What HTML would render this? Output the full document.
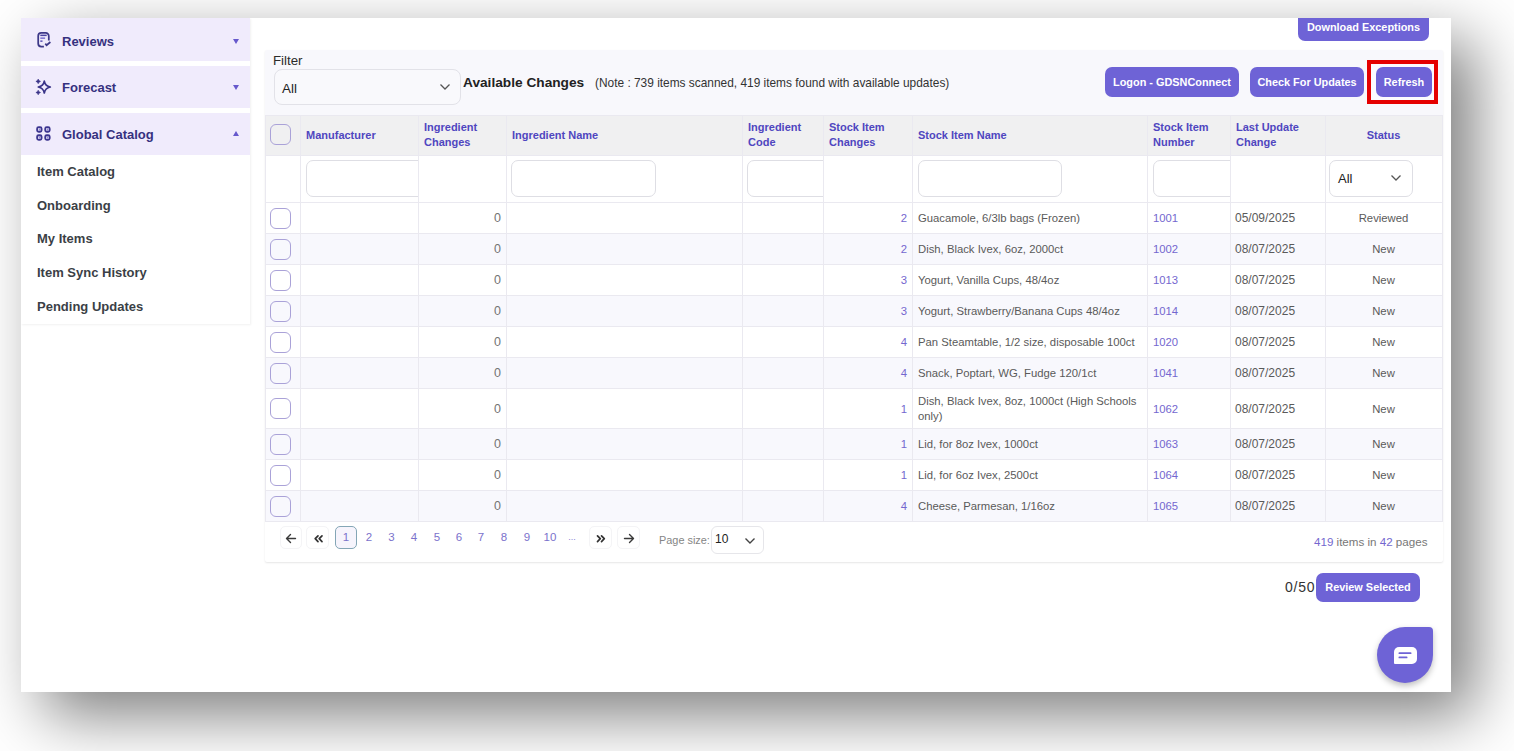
<!DOCTYPE html>
<html><head><meta charset="utf-8">
<style>
*{box-sizing:border-box;margin:0;padding:0}
html,body{width:1514px;height:751px;overflow:hidden;background:#fff;font-family:"Liberation Sans",sans-serif}
.frame{position:absolute;left:21px;top:18px;width:1430px;height:674px;background:#fff;overflow:hidden;box-shadow:23px 23px 60px rgba(0,0,0,0.51)}
.a{position:absolute;white-space:nowrap}
/* sidebar */
.side{position:absolute;left:0;top:0;width:229px;height:306px;background:#fff;box-shadow:1px 1px 2px rgba(0,0,0,0.06)}
.sh{position:absolute;left:0;width:229px;height:42px;background:#f0ebfc}
.sh .t{position:absolute;left:41px;top:1px;line-height:41px;font-size:13px;font-weight:bold;color:#36317f}
.sh .car{position:absolute;left:212px;top:19px;width:0;height:0;border-left:3.5px solid transparent;border-right:3.5px solid transparent;border-top:5px solid #6658cc}
.sh .car.up{border-top:0;border-bottom:5px solid #6658cc;top:18px}
.sh svg{position:absolute}
.si{position:absolute;left:16px;font-size:13px;font-weight:bold;color:#3b3f46;line-height:16px}
/* card */
.card{position:absolute;left:244px;top:32px;width:1178px;height:512px;background:#f8f8fc;border-radius:2px;box-shadow:0 1px 2px rgba(0,0,0,0.10)}
.btn{position:absolute;background:#6e63d6;color:#fff;font-weight:bold;font-size:10.9px;text-align:center;border-radius:7px}
</style></head><body>
<div class="frame">
  <!-- sidebar -->
  <div class="side">
    <div class="sh" style="top:0;height:43px">
      <svg style="left:15px;top:13px" width="16" height="17" viewBox="0 0 16 17"><path d="M12.8 9.6V4.9a3 3 0 0 0-3-3H5.2a3 3 0 0 0-3 3v7.7a3 3 0 0 0 3 3h2.7" fill="none" stroke="#3d3888" stroke-width="1.75"/><rect x="4.3" y="3.6" width="6.4" height="1.5" fill="#4a43a0"/><rect x="4.3" y="6.4" width="4.8" height="1.5" fill="#7c72d0"/><rect x="4.3" y="9.4" width="2.2" height="1.5" fill="#5a52b4"/><path d="M9.3 12.6l1.3 1.6 3.8-3.2" fill="none" stroke="#3d3888" stroke-width="1.7"/></svg>
      <div class="t" style="line-height:46px">Reviews</div><div class="car" style="top:21px"></div>
    </div>
    <div class="sh" style="top:48px">
      <svg style="left:14px;top:12px" width="18" height="18" viewBox="0 0 18 18"><path d="M9.3 3.1Q10.2 8.1 15.3 9Q10.2 9.9 9.3 15Q8.4 9.9 3.3 9Q8.4 8.1 9.3 3.1Z" fill="none" stroke="#3a3488" stroke-width="1.7" stroke-linejoin="round"/><path d="M3.2 1.1Q3.6 3 5.5 3.4Q3.6 3.8 3.2 5.7Q2.8 3.8 0.9 3.4Q2.8 3 3.2 1.1Z" fill="#3a3488" stroke="#3a3488" stroke-width="0.6"/><path d="M3.2 12.2Q3.6 14.1 5.5 14.5Q3.6 14.9 3.2 16.8Q2.8 14.9 0.9 14.5Q2.8 14.1 3.2 12.2Z" fill="#3a3488" stroke="#3a3488" stroke-width="0.6"/></svg>
      <div class="t">Forecast</div><div class="car"></div>
    </div>
    <div class="sh" style="top:95px">
      <svg style="left:14px;top:12px" width="17" height="17" viewBox="0 0 17 17"><g fill="none" stroke="#3d3690" stroke-width="1.9"><rect x="2.15" y="2.15" width="4.4" height="4.6" rx="1.5"/><rect x="10.25" y="2.15" width="4.4" height="4.6" rx="1.5"/><rect x="2.15" y="10.25" width="4.4" height="4.6" rx="1.5"/><rect x="10.25" y="10.25" width="4.4" height="4.6" rx="1.5"/></g><g fill="#7a71c8"><rect x="3.95" y="3.3" width="0.8" height="2.3"/><rect x="12.05" y="3.3" width="0.8" height="2.3"/><rect x="3.95" y="11.4" width="0.8" height="2.3"/><rect x="12.05" y="11.4" width="0.8" height="2.3"/></g></svg>
      <div class="t">Global Catalog</div><div class="car up"></div>
    </div>
    <div class="si" style="top:146px">Item Catalog</div>
    <div class="si" style="top:180px">Onboarding</div>
    <div class="si" style="top:213px">My Items</div>
    <div class="si" style="top:247px">Item Sync History</div>
    <div class="si" style="top:281px">Pending Updates</div>
  </div>

  <!-- download exceptions -->
  <div class="btn" style="left:1277px;top:-6px;width:131px;height:29px;line-height:31px">Download Exceptions</div>

  <!-- card -->
  <div class="card"></div>
  <div class="a" style="left:252px;top:35px;font-size:13.3px;color:#2b2b2b">Filter</div>
  <div class="a" style="left:253px;top:51px;width:187px;height:36px;border:1px solid #e2e2e8;border-radius:8px;background:#f9f9fc"></div>
  <div class="a" style="left:261px;top:63px;font-size:13.4px;color:#222">All</div>
  <svg class="a" style="left:418px;top:65px" width="12" height="8" viewBox="0 0 12 8"><path d="M1.5 1.5l4.5 4.5 4.5-4.5" fill="none" stroke="#555" stroke-width="1.3"/></svg>
  <div class="a" style="left:442px;top:57px;font-size:13.7px;font-weight:bold;color:#222">Available Changes</div>
  <div class="a" style="left:574px;top:58px;font-size:11.9px;color:#333">(Note : 739 items scanned, 419 items found with available updates)</div>

  <div class="btn" style="left:1084px;top:49px;width:134px;height:30px;line-height:30px">Logon - GDSNConnect</div>
  <div class="btn" style="left:1229px;top:49px;width:114px;height:30px;line-height:30px">Check For Updates</div>
  <div class="a" style="left:1346px;top:42px;width:71px;height:44px;border:4.5px solid #e50000;background:#fbfafe"></div>
  <div class="btn" style="left:1355px;top:49px;width:56px;height:30px;line-height:30px">Refresh</div>

  <div id="table"><div class="a" style="left:244px;top:97px;width:1177px;height:40px;background:#f0f0f1;"></div>
<div class="a" style="left:244px;top:137px;width:1177px;height:47px;background:#fff;"></div>
<div class="a" style="left:244px;top:184px;width:1177px;height:31px;background:#ffffff;"></div>
<div class="a" style="left:244px;top:215px;width:1177px;height:31px;background:#f8f8fd;"></div>
<div class="a" style="left:244px;top:246px;width:1177px;height:31px;background:#ffffff;"></div>
<div class="a" style="left:244px;top:277px;width:1177px;height:31px;background:#f8f8fd;"></div>
<div class="a" style="left:244px;top:308px;width:1177px;height:31px;background:#ffffff;"></div>
<div class="a" style="left:244px;top:339px;width:1177px;height:31px;background:#f8f8fd;"></div>
<div class="a" style="left:244px;top:370px;width:1177px;height:40px;background:#ffffff;"></div>
<div class="a" style="left:244px;top:410px;width:1177px;height:31px;background:#f8f8fd;"></div>
<div class="a" style="left:244px;top:441px;width:1177px;height:31px;background:#ffffff;"></div>
<div class="a" style="left:244px;top:472px;width:1177px;height:31px;background:#f8f8fd;"></div>
<div class="a" style="left:244px;top:503px;width:1178px;height:41px;background:#fff;border-radius:0 0 3px 3px;"></div>
<div class="a" style="left:285px;top:97px;height:40px;line-height:40px;color:#4f46c0;font-weight:bold;font-size:11px;">Manufacturer</div>
<div class="a" style="left:403px;top:102px;line-height:15px;color:#4f46c0;font-weight:bold;font-size:11px;">Ingredient<br>Changes</div>
<div class="a" style="left:491px;top:97px;height:40px;line-height:40px;color:#4f46c0;font-weight:bold;font-size:11px;">Ingredient Name</div>
<div class="a" style="left:727px;top:102px;line-height:15px;color:#4f46c0;font-weight:bold;font-size:11px;">Ingredient<br>Code</div>
<div class="a" style="left:808px;top:102px;line-height:15px;color:#4f46c0;font-weight:bold;font-size:11px;">Stock Item<br>Changes</div>
<div class="a" style="left:897px;top:97px;height:40px;line-height:40px;color:#4f46c0;font-weight:bold;font-size:11px;">Stock Item Name</div>
<div class="a" style="left:1132px;top:102px;line-height:15px;color:#4f46c0;font-weight:bold;font-size:11px;">Stock Item<br>Number</div>
<div class="a" style="left:1215px;top:102px;line-height:15px;color:#4f46c0;font-weight:bold;font-size:11px;">Last Update<br>Change</div>
<div class="a" style="left:1304px;top:97px;height:40px;line-height:40px;color:#4f46c0;font-weight:bold;font-size:11px;width:117px;text-align:center;">Status</div>
<div class="a" style="left:280px;top:137px;width:117px;height:47px;overflow:hidden"><div style="position:absolute;left:5px;top:5px;width:150px;height:37px;border:1px solid #dedee4;border-radius:7px;background:#fff"></div></div>
<div class="a" style="left:486px;top:137px;width:235px;height:47px;overflow:hidden"><div style="position:absolute;left:4px;top:5px;width:145px;height:37px;border:1px solid #dedee4;border-radius:7px;background:#fff"></div></div>
<div class="a" style="left:722px;top:137px;width:80px;height:47px;overflow:hidden"><div style="position:absolute;left:4px;top:5px;width:150px;height:37px;border:1px solid #dedee4;border-radius:7px;background:#fff"></div></div>
<div class="a" style="left:892px;top:137px;width:234px;height:47px;overflow:hidden"><div style="position:absolute;left:5px;top:5px;width:144px;height:37px;border:1px solid #dedee4;border-radius:7px;background:#fff"></div></div>
<div class="a" style="left:1127px;top:137px;width:82px;height:47px;overflow:hidden"><div style="position:absolute;left:5px;top:5px;width:150px;height:37px;border:1px solid #dedee4;border-radius:7px;background:#fff"></div></div>
<div class="a" style="left:1308px;top:142px;width:84px;height:37px;border:1px solid #dedee4;border-radius:7px;background:#fff;"></div>
<div class="a" style="left:1317px;top:142px;height:37px;line-height:37px;font-size:13px;color:#222;">All</div>
<svg class="a" style="left:1369px;top:156px" width="12" height="8" viewBox="0 0 12 8"><path d="M1.5 1.5l4.5 4.5 4.5-4.5" fill="none" stroke="#555" stroke-width="1.3"/></svg>
<div class="a" style="left:244px;top:97px;width:1px;height:406px;background:#eae9f0;"></div>
<div class="a" style="left:279px;top:97px;width:1px;height:406px;background:#eae9f0;"></div>
<div class="a" style="left:397px;top:97px;width:1px;height:406px;background:#eae9f0;"></div>
<div class="a" style="left:485px;top:97px;width:1px;height:406px;background:#eae9f0;"></div>
<div class="a" style="left:721px;top:97px;width:1px;height:406px;background:#eae9f0;"></div>
<div class="a" style="left:802px;top:97px;width:1px;height:406px;background:#eae9f0;"></div>
<div class="a" style="left:891px;top:97px;width:1px;height:406px;background:#eae9f0;"></div>
<div class="a" style="left:1126px;top:97px;width:1px;height:406px;background:#eae9f0;"></div>
<div class="a" style="left:1209px;top:97px;width:1px;height:406px;background:#eae9f0;"></div>
<div class="a" style="left:1304px;top:97px;width:1px;height:406px;background:#eae9f0;"></div>
<div class="a" style="left:1421px;top:97px;width:1px;height:406px;background:#eae9f0;"></div>
<div class="a" style="left:244px;top:97px;width:1178px;height:1px;background:#eae9f0;"></div>
<div class="a" style="left:244px;top:137px;width:1178px;height:1px;background:#eae9f0;"></div>
<div class="a" style="left:244px;top:184px;width:1178px;height:1px;background:#eae9f0;"></div>
<div class="a" style="left:244px;top:215px;width:1178px;height:1px;background:#eae9f0;"></div>
<div class="a" style="left:244px;top:246px;width:1178px;height:1px;background:#eae9f0;"></div>
<div class="a" style="left:244px;top:277px;width:1178px;height:1px;background:#eae9f0;"></div>
<div class="a" style="left:244px;top:308px;width:1178px;height:1px;background:#eae9f0;"></div>
<div class="a" style="left:244px;top:339px;width:1178px;height:1px;background:#eae9f0;"></div>
<div class="a" style="left:244px;top:370px;width:1178px;height:1px;background:#eae9f0;"></div>
<div class="a" style="left:244px;top:410px;width:1178px;height:1px;background:#eae9f0;"></div>
<div class="a" style="left:244px;top:441px;width:1178px;height:1px;background:#eae9f0;"></div>
<div class="a" style="left:244px;top:472px;width:1178px;height:1px;background:#eae9f0;"></div>
<div class="a" style="left:244px;top:503px;width:1178px;height:1px;background:#eae9f0;"></div>
<div class="a" style="left:249px;top:106px;width:21px;height:21px;border:1.8px solid #aaa2d8;border-radius:6px;background:transparent;"></div>
<div class="a" style="left:249px;top:190px;width:21px;height:21px;border:1.8px solid #aaa2d8;border-radius:6px;background:transparent;"></div>
<div class="a" style="left:397px;top:185px;height:31px;line-height:31px;font-size:11.3px;color:#5a5a5a;font-size:12.5px;color:#747474;width:83px;text-align:right;">0</div>
<div class="a" style="left:802px;top:185px;height:31px;line-height:31px;font-size:11.3px;color:#7467cf;width:84px;text-align:right;">2</div>
<div class="a" style="left:897px;top:185px;height:31px;line-height:31px;font-size:11.3px;color:#5a5a5a;">Guacamole, 6/3lb bags (Frozen)</div>
<div class="a" style="left:1132px;top:185px;height:31px;line-height:31px;font-size:11.3px;color:#7467cf;">1001</div>
<div class="a" style="left:1214px;top:185px;height:31px;line-height:31px;font-size:11.3px;color:#5a5a5a;font-size:12px;">05/09/2025</div>
<div class="a" style="left:1304px;top:185px;height:31px;line-height:31px;font-size:11.3px;color:#5a5a5a;width:117px;text-align:center;">Reviewed</div>
<div class="a" style="left:249px;top:221px;width:21px;height:21px;border:1.8px solid #aaa2d8;border-radius:6px;background:transparent;"></div>
<div class="a" style="left:397px;top:216px;height:31px;line-height:31px;font-size:11.3px;color:#5a5a5a;font-size:12.5px;color:#747474;width:83px;text-align:right;">0</div>
<div class="a" style="left:802px;top:216px;height:31px;line-height:31px;font-size:11.3px;color:#7467cf;width:84px;text-align:right;">2</div>
<div class="a" style="left:897px;top:216px;height:31px;line-height:31px;font-size:11.3px;color:#5a5a5a;">Dish, Black Ivex, 6oz, 2000ct</div>
<div class="a" style="left:1132px;top:216px;height:31px;line-height:31px;font-size:11.3px;color:#7467cf;">1002</div>
<div class="a" style="left:1214px;top:216px;height:31px;line-height:31px;font-size:11.3px;color:#5a5a5a;font-size:12px;">08/07/2025</div>
<div class="a" style="left:1304px;top:216px;height:31px;line-height:31px;font-size:11.3px;color:#5a5a5a;width:117px;text-align:center;">New</div>
<div class="a" style="left:249px;top:252px;width:21px;height:21px;border:1.8px solid #aaa2d8;border-radius:6px;background:transparent;"></div>
<div class="a" style="left:397px;top:247px;height:31px;line-height:31px;font-size:11.3px;color:#5a5a5a;font-size:12.5px;color:#747474;width:83px;text-align:right;">0</div>
<div class="a" style="left:802px;top:247px;height:31px;line-height:31px;font-size:11.3px;color:#7467cf;width:84px;text-align:right;">3</div>
<div class="a" style="left:897px;top:247px;height:31px;line-height:31px;font-size:11.3px;color:#5a5a5a;">Yogurt, Vanilla Cups, 48/4oz</div>
<div class="a" style="left:1132px;top:247px;height:31px;line-height:31px;font-size:11.3px;color:#7467cf;">1013</div>
<div class="a" style="left:1214px;top:247px;height:31px;line-height:31px;font-size:11.3px;color:#5a5a5a;font-size:12px;">08/07/2025</div>
<div class="a" style="left:1304px;top:247px;height:31px;line-height:31px;font-size:11.3px;color:#5a5a5a;width:117px;text-align:center;">New</div>
<div class="a" style="left:249px;top:283px;width:21px;height:21px;border:1.8px solid #aaa2d8;border-radius:6px;background:transparent;"></div>
<div class="a" style="left:397px;top:278px;height:31px;line-height:31px;font-size:11.3px;color:#5a5a5a;font-size:12.5px;color:#747474;width:83px;text-align:right;">0</div>
<div class="a" style="left:802px;top:278px;height:31px;line-height:31px;font-size:11.3px;color:#7467cf;width:84px;text-align:right;">3</div>
<div class="a" style="left:897px;top:278px;height:31px;line-height:31px;font-size:11.3px;color:#5a5a5a;">Yogurt, Strawberry/Banana Cups 48/4oz</div>
<div class="a" style="left:1132px;top:278px;height:31px;line-height:31px;font-size:11.3px;color:#7467cf;">1014</div>
<div class="a" style="left:1214px;top:278px;height:31px;line-height:31px;font-size:11.3px;color:#5a5a5a;font-size:12px;">08/07/2025</div>
<div class="a" style="left:1304px;top:278px;height:31px;line-height:31px;font-size:11.3px;color:#5a5a5a;width:117px;text-align:center;">New</div>
<div class="a" style="left:249px;top:314px;width:21px;height:21px;border:1.8px solid #aaa2d8;border-radius:6px;background:transparent;"></div>
<div class="a" style="left:397px;top:309px;height:31px;line-height:31px;font-size:11.3px;color:#5a5a5a;font-size:12.5px;color:#747474;width:83px;text-align:right;">0</div>
<div class="a" style="left:802px;top:309px;height:31px;line-height:31px;font-size:11.3px;color:#7467cf;width:84px;text-align:right;">4</div>
<div class="a" style="left:897px;top:309px;height:31px;line-height:31px;font-size:11.3px;color:#5a5a5a;">Pan Steamtable, 1/2 size, disposable 100ct</div>
<div class="a" style="left:1132px;top:309px;height:31px;line-height:31px;font-size:11.3px;color:#7467cf;">1020</div>
<div class="a" style="left:1214px;top:309px;height:31px;line-height:31px;font-size:11.3px;color:#5a5a5a;font-size:12px;">08/07/2025</div>
<div class="a" style="left:1304px;top:309px;height:31px;line-height:31px;font-size:11.3px;color:#5a5a5a;width:117px;text-align:center;">New</div>
<div class="a" style="left:249px;top:345px;width:21px;height:21px;border:1.8px solid #aaa2d8;border-radius:6px;background:transparent;"></div>
<div class="a" style="left:397px;top:340px;height:31px;line-height:31px;font-size:11.3px;color:#5a5a5a;font-size:12.5px;color:#747474;width:83px;text-align:right;">0</div>
<div class="a" style="left:802px;top:340px;height:31px;line-height:31px;font-size:11.3px;color:#7467cf;width:84px;text-align:right;">4</div>
<div class="a" style="left:897px;top:340px;height:31px;line-height:31px;font-size:11.3px;color:#5a5a5a;">Snack, Poptart, WG, Fudge 120/1ct</div>
<div class="a" style="left:1132px;top:340px;height:31px;line-height:31px;font-size:11.3px;color:#7467cf;">1041</div>
<div class="a" style="left:1214px;top:340px;height:31px;line-height:31px;font-size:11.3px;color:#5a5a5a;font-size:12px;">08/07/2025</div>
<div class="a" style="left:1304px;top:340px;height:31px;line-height:31px;font-size:11.3px;color:#5a5a5a;width:117px;text-align:center;">New</div>
<div class="a" style="left:249px;top:380px;width:21px;height:21px;border:1.8px solid #aaa2d8;border-radius:6px;background:transparent;"></div>
<div class="a" style="left:397px;top:371px;height:40px;line-height:40px;font-size:11.3px;color:#5a5a5a;font-size:12.5px;color:#747474;width:83px;text-align:right;">0</div>
<div class="a" style="left:802px;top:371px;height:40px;line-height:40px;font-size:11.3px;color:#7467cf;width:84px;text-align:right;">1</div>
<div class="a" style="left:897px;top:376px;line-height:15px;font-size:11.3px;color:#5a5a5a;">Dish, Black Ivex, 8oz, 1000ct (High Schools<br>only)</div>
<div class="a" style="left:1132px;top:371px;height:40px;line-height:40px;font-size:11.3px;color:#7467cf;">1062</div>
<div class="a" style="left:1214px;top:371px;height:40px;line-height:40px;font-size:11.3px;color:#5a5a5a;font-size:12px;">08/07/2025</div>
<div class="a" style="left:1304px;top:371px;height:40px;line-height:40px;font-size:11.3px;color:#5a5a5a;width:117px;text-align:center;">New</div>
<div class="a" style="left:249px;top:416px;width:21px;height:21px;border:1.8px solid #aaa2d8;border-radius:6px;background:transparent;"></div>
<div class="a" style="left:397px;top:411px;height:31px;line-height:31px;font-size:11.3px;color:#5a5a5a;font-size:12.5px;color:#747474;width:83px;text-align:right;">0</div>
<div class="a" style="left:802px;top:411px;height:31px;line-height:31px;font-size:11.3px;color:#7467cf;width:84px;text-align:right;">1</div>
<div class="a" style="left:897px;top:411px;height:31px;line-height:31px;font-size:11.3px;color:#5a5a5a;">Lid, for 8oz Ivex, 1000ct</div>
<div class="a" style="left:1132px;top:411px;height:31px;line-height:31px;font-size:11.3px;color:#7467cf;">1063</div>
<div class="a" style="left:1214px;top:411px;height:31px;line-height:31px;font-size:11.3px;color:#5a5a5a;font-size:12px;">08/07/2025</div>
<div class="a" style="left:1304px;top:411px;height:31px;line-height:31px;font-size:11.3px;color:#5a5a5a;width:117px;text-align:center;">New</div>
<div class="a" style="left:249px;top:447px;width:21px;height:21px;border:1.8px solid #aaa2d8;border-radius:6px;background:transparent;"></div>
<div class="a" style="left:397px;top:442px;height:31px;line-height:31px;font-size:11.3px;color:#5a5a5a;font-size:12.5px;color:#747474;width:83px;text-align:right;">0</div>
<div class="a" style="left:802px;top:442px;height:31px;line-height:31px;font-size:11.3px;color:#7467cf;width:84px;text-align:right;">1</div>
<div class="a" style="left:897px;top:442px;height:31px;line-height:31px;font-size:11.3px;color:#5a5a5a;">Lid, for 6oz Ivex, 2500ct</div>
<div class="a" style="left:1132px;top:442px;height:31px;line-height:31px;font-size:11.3px;color:#7467cf;">1064</div>
<div class="a" style="left:1214px;top:442px;height:31px;line-height:31px;font-size:11.3px;color:#5a5a5a;font-size:12px;">08/07/2025</div>
<div class="a" style="left:1304px;top:442px;height:31px;line-height:31px;font-size:11.3px;color:#5a5a5a;width:117px;text-align:center;">New</div>
<div class="a" style="left:249px;top:478px;width:21px;height:21px;border:1.8px solid #aaa2d8;border-radius:6px;background:transparent;"></div>
<div class="a" style="left:397px;top:473px;height:31px;line-height:31px;font-size:11.3px;color:#5a5a5a;font-size:12.5px;color:#747474;width:83px;text-align:right;">0</div>
<div class="a" style="left:802px;top:473px;height:31px;line-height:31px;font-size:11.3px;color:#7467cf;width:84px;text-align:right;">4</div>
<div class="a" style="left:897px;top:473px;height:31px;line-height:31px;font-size:11.3px;color:#5a5a5a;">Cheese, Parmesan, 1/16oz</div>
<div class="a" style="left:1132px;top:473px;height:31px;line-height:31px;font-size:11.3px;color:#7467cf;">1065</div>
<div class="a" style="left:1214px;top:473px;height:31px;line-height:31px;font-size:11.3px;color:#5a5a5a;font-size:12px;">08/07/2025</div>
<div class="a" style="left:1304px;top:473px;height:31px;line-height:31px;font-size:11.3px;color:#5a5a5a;width:117px;text-align:center;">New</div>
<div class="a" style="left:259px;top:508px;width:22px;height:23px;line-height:23px;text-align:center;border:1px solid #f4f4f6;border-radius:5px;"></div>
<div class="a" style="left:285px;top:508px;width:23px;height:23px;line-height:23px;text-align:center;border:1px solid #f4f4f6;border-radius:5px;"></div>
<div class="a" style="left:314px;top:508px;width:22px;height:23px;line-height:23px;text-align:center;border:1px solid #f4f4f6;border-radius:5px;border:1px solid #84a6b6;background:#f6f4fc;color:#7b72cc;font-size:11.5px;line-height:21px;">1</div>
<div class="a" style="left:333px;top:508px;width:30px;height:22px;line-height:22px;text-align:center;font-size:11.5px;color:#7b72cc">2</div>
<div class="a" style="left:355.5px;top:508px;width:30px;height:22px;line-height:22px;text-align:center;font-size:11.5px;color:#7b72cc">3</div>
<div class="a" style="left:378px;top:508px;width:30px;height:22px;line-height:22px;text-align:center;font-size:11.5px;color:#7b72cc">4</div>
<div class="a" style="left:401px;top:508px;width:30px;height:22px;line-height:22px;text-align:center;font-size:11.5px;color:#7b72cc">5</div>
<div class="a" style="left:423px;top:508px;width:30px;height:22px;line-height:22px;text-align:center;font-size:11.5px;color:#7b72cc">6</div>
<div class="a" style="left:445px;top:508px;width:30px;height:22px;line-height:22px;text-align:center;font-size:11.5px;color:#7b72cc">7</div>
<div class="a" style="left:468px;top:508px;width:30px;height:22px;line-height:22px;text-align:center;font-size:11.5px;color:#7b72cc">8</div>
<div class="a" style="left:491px;top:508px;width:30px;height:22px;line-height:22px;text-align:center;font-size:11.5px;color:#7b72cc">9</div>
<div class="a" style="left:514px;top:508px;width:30px;height:22px;line-height:22px;text-align:center;font-size:11.5px;color:#7b72cc">10</div>
<div class="a" style="left:541px;top:508px;width:20px;height:22px;line-height:22px;text-align:center;font-size:9px;color:#8a80d4">...</div>
<div class="a" style="left:568px;top:508px;width:23px;height:23px;line-height:23px;text-align:center;border:1px solid #f4f4f6;border-radius:5px;"></div>
<div class="a" style="left:596px;top:508px;width:23px;height:23px;line-height:23px;text-align:center;border:1px solid #f4f4f6;border-radius:5px;"></div>
<svg class="a" style="left:263px;top:514px" width="14" height="14" viewBox="0 0 14 14"><path d="M11.5 6.5H2.5M6.5 2.5L2.5 6.5l4 4" fill="none" stroke="#3a3a3a" stroke-width="1.4" stroke-linecap="round" stroke-linejoin="round"/></svg>
<svg class="a" style="left:291px;top:514px" width="14" height="14" viewBox="0 0 14 14"><path d="M6 3.8L3.2 6.7 6 9.6M10 3.8L7.2 6.7 10 9.6" fill="none" stroke="#333" stroke-width="1.7" stroke-linecap="round" stroke-linejoin="round"/></svg>
<svg class="a" style="left:573px;top:514px" width="14" height="14" viewBox="0 0 14 14"><path d="M3.5 3.8l2.8 2.9-2.8 2.9M7.5 3.8l2.8 2.9-2.8 2.9" fill="none" stroke="#333" stroke-width="1.7" stroke-linecap="round" stroke-linejoin="round"/></svg>
<svg class="a" style="left:601px;top:514px" width="14" height="14" viewBox="0 0 14 14"><path d="M2.5 6.5h9M7.5 2.5l4 4-4 4" fill="none" stroke="#3a3a3a" stroke-width="1.4" stroke-linecap="round" stroke-linejoin="round"/></svg>
<div class="a" style="left:638px;top:510px;height:24px;line-height:24px;font-size:10.9px;color:#858585;">Page size:</div>
<div class="a" style="left:690px;top:508px;width:53px;height:28px;border:1px solid #e6e6ea;border-radius:6px;background:#fff;"></div>
<div class="a" style="left:694px;top:510px;height:22px;line-height:22px;font-size:12px;color:#222;">10</div>
<svg class="a" style="left:723px;top:519px" width="12" height="8" viewBox="0 0 12 8"><path d="M1.5 1.5l4.5 4.5 4.5-4.5" fill="none" stroke="#444" stroke-width="1.4"/></svg>
<div class="a" style="left:1293px;top:512px;height:24px;line-height:24px;font-size:11.6px;color:#777;"><span style="color:#7467cf">419</span> items in <span style="color:#7467cf">42</span> pages</div>
<div class="a" style="left:1264px;top:557px;height:24px;line-height:24px;font-size:14px;color:#333;letter-spacing:0.8px;">0/50</div>
<div class="btn" style="left:1295px;top:555px;width:104px;height:29px;line-height:29px">Review Selected</div>
<div class="a" style="left:1356px;top:609px;width:56px;height:56px;background:#6e63d6;border-radius:28px 4px 28px 28px;box-shadow:0 3px 6px rgba(0,0,0,0.25)"></div>
<svg class="a" style="left:1373px;top:629px" width="23" height="17" viewBox="0 0 23 17"><path d="M5 0H18A5 5 0 0 1 23 5V12A5 5 0 0 1 18 17H1A1 1 0 0 1 0 16V5A5 5 0 0 1 5 0Z" fill="#fff"/><rect x="4.5" y="5.3" width="13" height="1.7" rx="0.85" fill="#6e63d6"/><rect x="4.5" y="9.6" width="9" height="1.7" rx="0.85" fill="#6e63d6"/></svg></div><!--/table-->
</div>
</body></html>
